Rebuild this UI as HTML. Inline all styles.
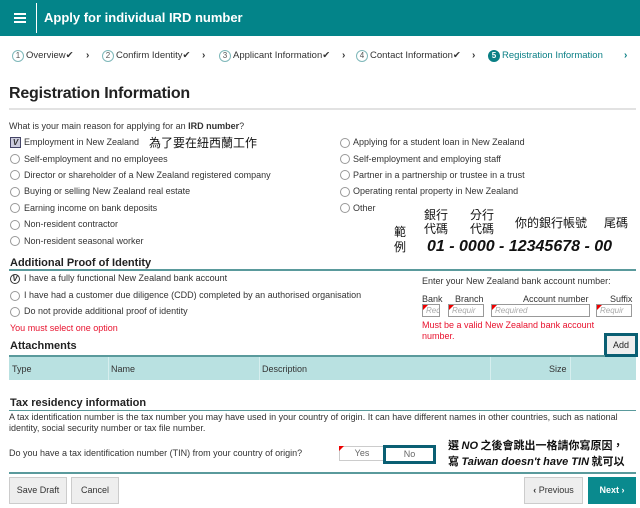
<!DOCTYPE html>
<html><head><meta charset="utf-8"><style>
*{margin:0;padding:0;box-sizing:border-box}
body{width:640px;height:508px;background:#fff;font-family:"Liberation Sans","Noto Sans CJK TC",sans-serif;font-size:9px;color:#333;position:relative;overflow:hidden}
.a{position:absolute;white-space:nowrap}
.hd{position:absolute;left:0;top:0;width:640px;height:36px;background:#038489}
.r{position:absolute;width:10px;height:10px;border:1px solid #999;border-radius:50%;background:#fff}
.c{display:inline-block;width:12px;height:12px;border:1px solid #7fb8ba;border-radius:50%;text-align:center;line-height:10px;font-size:8px;color:#555;margin-right:2px}
.b{font-weight:bold;color:#222}
.ln{position:absolute;height:2px;background:#5a9a9c}
.inp{position:absolute;top:304px;height:13px;border:1px solid #999;font-style:italic;color:#aaa;font-size:8px;padding-left:3px;line-height:11px;overflow:hidden}
.inp:before{content:"";position:absolute;left:0;top:0;border-top:5px solid #e00;border-right:5px solid transparent}
.btn{position:absolute;top:477px;height:27px;border:1px solid #ccc;background:#eee;font-size:9px;line-height:25px;text-align:center;color:#333}
.cj{font-family:"Noto Sans CJK TC",sans-serif;color:#111}
.ch{position:absolute;top:50px;font-weight:bold;font-size:10px;color:#333}
</style></head><body>
<div class="hd"></div>
<div class="a" style="left:14px;top:13px;width:12px;height:2px;background:#fff;box-shadow:0 4px 0 #fff,0 8px 0 #fff"></div>
<div class="a" style="left:36px;top:3px;width:1px;height:30px;background:#fff"></div>
<div class="a" style="left:44px;top:10px;color:#fff;font-weight:bold;font-size:13px">Apply for individual IRD number</div>
<div class="a" style="left:12px;top:50px;font-size:9.5px"><span class="c">1</span>Overview✔</div><div class="ch" style="left:86px">›</div>
<div class="a" style="left:102px;top:50px;font-size:9.5px"><span class="c">2</span>Confirm Identity✔</div><div class="ch" style="left:202px">›</div>
<div class="a" style="left:219px;top:50px;font-size:9.5px"><span class="c">3</span>Applicant Information✔</div><div class="ch" style="left:342px">›</div>
<div class="a" style="left:356px;top:50px;font-size:9.5px"><span class="c">4</span>Contact Information✔</div><div class="ch" style="left:472px">›</div>
<div class="a" style="left:488px;top:50px;color:#0a7f85;font-size:9.5px"><span class="c" style="background:#0a7f85;color:#fff;border-color:#0a7f85;font-weight:bold">5</span>Registration Information</div>
<div class="ch" style="left:624px;color:#0a7f85">›</div>
<div class="a" style="left:9px;top:85px;font-size:16px;font-weight:bold;color:#222;letter-spacing:-0.2px">Registration Information</div>
<div class="a" style="left:9px;top:108px;width:627px;height:2px;background:#e2e2e2"></div>
<div class="a" style="left:9px;top:121px">What is your main reason for applying for an <b>IRD number</b>?</div>
<div class="a" style="left:10px;top:137px;width:11px;height:11px;border:1px solid #446;background:#ccd;font-size:8px;line-height:9px;text-align:center;font-weight:bold;font-style:italic">V</div>
<div class="a" style="left:24px;top:137px">Employment in New Zealand</div>
<div class="a cj" style="left:149px;top:134px;font-size:12px">為了要在紐西蘭工作</div>
<div class="r" style="left:10px;top:154px"></div><div class="a" style="left:24px;top:154px">Self-employment and no employees</div>
<div class="r" style="left:10px;top:170px"></div><div class="a" style="left:24px;top:170px">Director or shareholder of a New Zealand registered company</div>
<div class="r" style="left:10px;top:187px"></div><div class="a" style="left:24px;top:186px">Buying or selling New Zealand real estate</div>
<div class="r" style="left:10px;top:203px"></div><div class="a" style="left:24px;top:203px">Earning income on bank deposits</div>
<div class="r" style="left:10px;top:220px"></div><div class="a" style="left:24px;top:219px">Non-resident contractor</div>
<div class="r" style="left:10px;top:236px"></div><div class="a" style="left:24px;top:236px">Non-resident seasonal worker</div>
<div class="r" style="left:340px;top:138px"></div><div class="a" style="left:353px;top:137px">Applying for a student loan in New Zealand</div>
<div class="r" style="left:340px;top:154px"></div><div class="a" style="left:353px;top:154px">Self-employment and employing staff</div>
<div class="r" style="left:340px;top:170px"></div><div class="a" style="left:353px;top:170px">Partner in a partnership or trustee in a trust</div>
<div class="r" style="left:340px;top:187px"></div><div class="a" style="left:353px;top:186px">Operating rental property in New Zealand</div>
<div class="r" style="left:340px;top:203px"></div><div class="a" style="left:353px;top:203px">Other</div>
<div class="a cj" style="left:394px;top:224px;font-size:12px;line-height:15px">範<br>例</div>
<div class="a cj" style="left:424px;top:208px;font-size:12px;line-height:14px">銀行<br>代碼</div>
<div class="a cj" style="left:470px;top:208px;font-size:12px;line-height:14px">分行<br>代碼</div>
<div class="a cj" style="left:515px;top:214px;font-size:12px">你的銀行帳號</div>
<div class="a cj" style="left:604px;top:214px;font-size:12px">尾碼</div>
<div class="a" style="left:427px;top:238px;font-size:16px;font-weight:bold;font-style:italic;color:#111">01 - 0000 - 12345678 - 00</div>
<div class="a" style="left:10px;top:257px;font-size:11px" ><span class="b">Additional Proof of Identity</span></div>
<div class="ln" style="left:9px;top:269px;width:627px"></div>
<div class="r" style="left:10px;top:274px;border-color:#333;font-size:8px;line-height:8px;text-align:center;font-weight:bold;font-style:italic">V</div>
<div class="a" style="left:24px;top:273px">I have a fully functional New Zealand bank account</div>
<div class="r" style="left:10px;top:291px"></div><div class="a" style="left:24px;top:290px">I have had a customer due diligence (CDD) completed by an authorised organisation</div>
<div class="r" style="left:10px;top:307px"></div><div class="a" style="left:24px;top:306px">Do not provide additional proof of identity</div>
<div class="a" style="left:10px;top:323px;color:#e8112d">You must select one option</div>
<div class="a" style="left:422px;top:276px">Enter your New Zealand bank account number:</div>
<div class="a" style="left:422px;top:294px">Bank</div><div class="a" style="left:455px;top:294px">Branch</div><div class="a" style="left:523px;top:294px">Account number</div><div class="a" style="left:610px;top:294px">Suffix</div>
<div class="inp" style="left:422px;width:18px">Rec</div>
<div class="inp" style="left:448px;width:36px">Requir</div>
<div class="inp" style="left:491px;width:99px">Required</div>
<div class="inp" style="left:596px;width:36px">Requir</div>
<div class="a" style="left:422px;top:320px;color:#e8112d;line-height:11px">Must be a valid New Zealand bank account<br>number.</div>
<div class="a" style="left:604px;top:333px;width:34px;height:24px;border:3px solid #0a5f73;background:#eee;text-align:center;line-height:18px;color:#222">Add</div>
<div class="a" style="left:10px;top:340px;font-size:11px"><span class="b">Attachments</span></div>
<div class="ln" style="left:9px;top:355px;width:596px"></div>
<div class="a" style="left:9px;top:357px;width:627px;height:23px;background:#b9e1e1"></div>
<div class="a" style="left:108px;top:357px;width:1px;height:23px;background:#d6eeee"></div>
<div class="a" style="left:259px;top:357px;width:1px;height:23px;background:#d6eeee"></div>
<div class="a" style="left:490px;top:357px;width:1px;height:23px;background:#d6eeee"></div>
<div class="a" style="left:570px;top:357px;width:1px;height:23px;background:#d6eeee"></div>
<div class="a" style="left:12px;top:364px">Type</div><div class="a" style="left:111px;top:364px">Name</div><div class="a" style="left:262px;top:364px">Description</div><div class="a" style="left:549px;top:364px">Size</div>
<div class="a" style="left:10px;top:397px;font-size:11px"><span class="b">Tax residency information</span></div>
<div class="ln" style="left:9px;top:410px;width:627px;height:1px"></div>
<div class="a" style="left:9px;top:412px;line-height:11px">A tax identification number is the tax number you may have used in your country of origin. It can have different names in other countries, such as national<br>identity, social security number or tax file number.</div>
<div class="a" style="left:9px;top:448px">Do you have a tax identification number (TIN) from your country of origin?</div>
<div class="a" style="left:339px;top:446px;width:46px;height:15px;border:1px solid #ccc;text-align:center;line-height:13px;color:#666">Yes</div>
<div class="a" style="left:339px;top:446px;border-top:5px solid #e00;border-right:5px solid transparent"></div>
<div class="a" style="left:383px;top:445px;width:53px;height:19px;border:3px solid #0a5f73;text-align:center;line-height:13px;color:#666;background:#fff">No</div>
<div class="a cj" style="left:448px;top:438px;font-size:11px;line-height:15px;font-weight:bold">選 <i style="font-family:'Liberation Sans'">NO</i> 之後會跳出一格請你寫原因，<br>寫 <i style="font-family:'Liberation Sans'">Taiwan doesn't have TIN</i> 就可以</div>
<div class="ln" style="left:9px;top:472px;width:627px"></div>
<div class="btn" style="left:9px;width:58px">Save Draft</div>
<div class="btn" style="left:71px;width:48px">Cancel</div>
<div class="btn" style="left:524px;width:59px"><b>‹</b> Previous</div>
<div class="btn" style="left:588px;width:48px;background:#0a8a8e;border-color:#0a8a8e;color:#fff;font-weight:bold">Next ›</div>
</body></html>
